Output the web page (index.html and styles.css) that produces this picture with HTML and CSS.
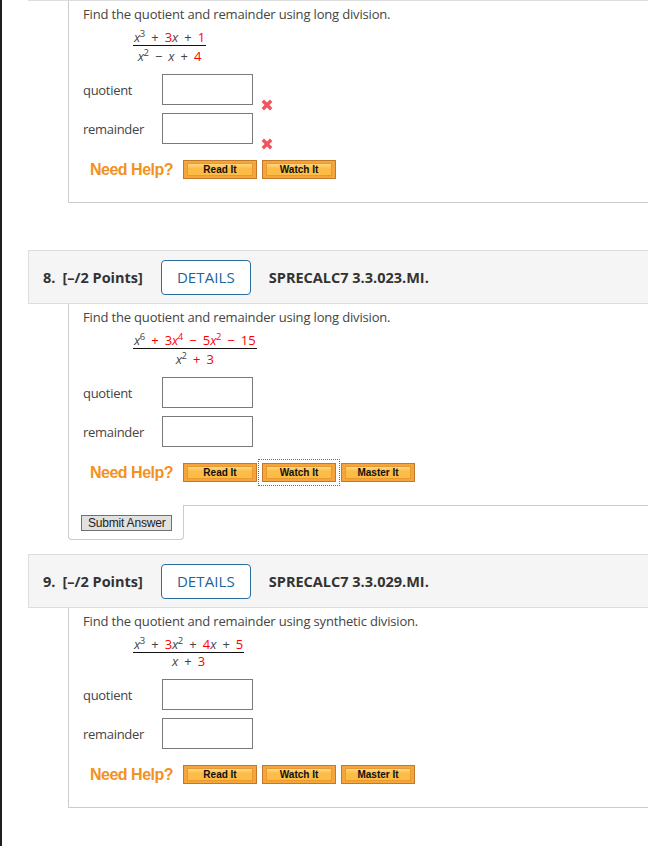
FILE: index.html
```html
<!DOCTYPE html>
<html lang="en">
<head>
    <meta charset="UTF-8">
    <meta name="viewport" content="width=device-width, initial-scale=1.0">
    <title>Assignment</title>
    <link rel="stylesheet" href="styles.css">
</head>
<body>

    <div class="page">

        <!-- question 7 (header scrolled away) -->
        <div class="question">
            <div class="head-tail"></div>
            <div class="q-body">
                <p class="prompt">Find the quotient and remainder using long division.</p>
                <div class="frac">
                    <div class="num"><i>x</i><sup>3</sup><b class="op">+</b><span class="r">3</span><i>x</i><b class="op">+</b><span class="r">1</span></div>
                    <div class="den has-sup"><i>x</i><sup>2</sup><b class="op">&minus;</b><i>x</i><b class="op">+</b><span class="r">4</span></div>
                </div>
                <div class="answer-row">
                    <label>quotient</label>
                    <input type="text" class="ans">
                    <svg class="wrong" width="12" height="12" viewBox="0 0 12 12"><path d="M1.8 1.8 L10.2 10.2 M10.2 1.8 L1.8 10.2"/></svg>
                </div>
                <div class="answer-row">
                    <label>remainder</label>
                    <input type="text" class="ans">
                    <svg class="wrong" width="12" height="12" viewBox="0 0 12 12"><path d="M1.8 1.8 L10.2 10.2 M10.2 1.8 L1.8 10.2"/></svg>
                </div>
                <div class="help-row">
                    <span class="need-help">Need Help?</span>
                    <button class="help-btn"><span>Read It</span></button>
                    <button class="help-btn"><span>Watch It</span></button>
                </div>
            </div>
        </div>

        <!-- question 8 -->
        <div class="question has-submit">
            <div class="q-head">
                <span class="q-num">8.</span>
                <span>[&ndash;/2 Points]</span>
                <button class="details">DETAILS</button>
                <span class="q-code">SPRECALC7 3.3.023.MI.</span>
            </div>
            <div class="q-body">
                <p class="prompt">Find the quotient and remainder using long division.</p>
                <div class="frac">
                    <div class="num"><i>x</i><sup>6</sup><span class="r"><b class="op">+</b>3<i>x</i><sup>4</sup><b class="op">&minus;</b>5<i>x</i><sup>2</sup><b class="op">&minus;</b>15</span></div>
                    <div class="den has-sup"><i>x</i><sup>2</sup><span class="r"><b class="op">+</b>3</span></div>
                </div>
                <div class="answer-row">
                    <label>quotient</label>
                    <input type="text" class="ans">
                </div>
                <div class="answer-row">
                    <label>remainder</label>
                    <input type="text" class="ans">
                </div>
                <div class="help-row">
                    <span class="need-help">Need Help?</span>
                    <button class="help-btn"><span>Read It</span></button>
                    <button class="help-btn focused"><span>Watch It</span></button>
                    <button class="help-btn"><span>Master It</span></button>
                </div>
            </div>
            <div class="submit-tab">
                <button class="submit-btn">Submit Answer</button>
            </div>
        </div>

        <!-- question 9 -->
        <div class="question">
            <div class="q-head">
                <span class="q-num">9.</span>
                <span>[&ndash;/2 Points]</span>
                <button class="details">DETAILS</button>
                <span class="q-code">SPRECALC7 3.3.029.MI.</span>
            </div>
            <div class="q-body">
                <p class="prompt">Find the quotient and remainder using synthetic division.</p>
                <div class="frac">
                    <div class="num"><i>x</i><sup>3</sup><b class="op">+</b><span class="r">3</span><i>x</i><sup>2</sup><b class="op">+</b><span class="r">4</span><i>x</i><b class="op">+</b><span class="r">5</span></div>
                    <div class="den"><i>x</i><b class="op">+</b><span class="r">3</span></div>
                </div>
                <div class="answer-row">
                    <label>quotient</label>
                    <input type="text" class="ans">
                </div>
                <div class="answer-row">
                    <label>remainder</label>
                    <input type="text" class="ans">
                </div>
                <div class="help-row">
                    <span class="need-help">Need Help?</span>
                    <button class="help-btn"><span>Read It</span></button>
                    <button class="help-btn"><span>Watch It</span></button>
                    <button class="help-btn"><span>Master It</span></button>
                </div>
            </div>
        </div>

    </div>

</body>
</html>
```

FILE: styles.css
```css
body {
    margin: 0;
    font-family: "Open Sans", sans-serif;
    color: #444;
    background: #fff;
}

/* dark line at the left of the frame */
.page {
    min-height: 100vh;
    box-sizing: border-box;
    border-left: 2px solid #1e1e1e;
    overflow: hidden;
}

.question {
    padding-bottom: 47px;
}

.question.has-submit {
    padding-bottom: 14px;
}

/* bottom edge of the header above the fold */
.head-tail {
    margin-left: 26px;
    border-bottom: 1px solid #ddd;
}

/* question header */
.q-head {
    display: flex;
    align-items: center;
    height: 52px;
    margin-left: 26px;
    padding: 0 14px;
    border: 1px solid #ddd;
    border-right: 0;
    background-color: #f5f5f5;
    color: #333;
    font-size: 14.5px;
    font-weight: bold;
}

.q-num {
    margin-right: 7px;
}

.details {
    height: 35px;
    margin-left: 18px;
    padding: 0 15px;
    border: 1px solid #2b6d9c;
    border-radius: 4px;
    background: #fff;
    color: #1c659b;
    font-family: "Open Sans", sans-serif;
    font-size: 15px;
    letter-spacing: 0.1px;
}

.q-code {
    margin-left: 18px;
}

/* question body */
.q-body {
    margin-left: 66px;
    padding: 4px 0 23px 14px;
    border-left: 1px solid #ccc;
    border-bottom: 1px solid #ccc;
}

.prompt {
    margin: 0;
    font-size: 13px;
    line-height: 18px;
    letter-spacing: -0.17px;
}

/* fraction */
.frac {
    display: inline-block;
    margin: 7px 0 0 50px;
    font-size: 13px;
    text-align: center;
}

.frac .num {
    line-height: 15px;
    padding: 0 1px;
    border-bottom: 1px solid #111;
}

.frac .den {
    padding-top: 1px;
    line-height: 15px;
}

.frac .den.has-sup {
    padding-top: 3px;
}

.frac i {
    margin-right: 0;
}

.frac sup {
    margin-left: -0.5px;
    font-size: 9.5px;
    line-height: 0;
    vertical-align: 5px;
}

.frac .op {
    margin: 0 6px;
    font-weight: normal;
}

.r {
    color: #f00;
}

/* answer rows */
.answer-row {
    display: flex;
    align-items: center;
    margin-top: 8px;
}

.answer-row label {
    width: 79px;
    font-size: 13px;
    letter-spacing: -0.3px;
}

.ans {
    width: 91px;
    height: 31px;
    box-sizing: border-box;
    margin: 0;
    border: 1px solid #7a7a7a;
    background: #fff;
}

.wrong {
    align-self: flex-end;
    margin: 0 0 -6px 8px;
    fill: none;
    stroke: #f2545b;
    stroke-width: 3.4;
}

/* need help */
.help-row {
    display: flex;
    align-items: center;
    margin-top: 16px;
    height: 19px;
}

.need-help {
    margin: 0 10px 0 7px;
    color: #f39121;
    font-family: "Liberation Sans", Arial, sans-serif;
    font-size: 16px;
    font-weight: bold;
    letter-spacing: -0.5px;
}

.help-btn {
    width: 74px;
    height: 19px;
    box-sizing: border-box;
    margin: 0 5px 0 0;
    padding: 2px 3px;
    border: 1px solid #c27a2a;
    background: #f6a53a;
    color: #111;
    font-family: "Liberation Sans", Arial, sans-serif;
    font-size: 10px;
    font-weight: bold;
}

.help-btn span {
    display: block;
    height: 13px;
    box-sizing: border-box;
    border: 1px solid #e89a30;
    background: linear-gradient(#ffd887, #fdbc46 40%);
    line-height: 11px;
}

.help-btn.focused {
    outline: 1px dotted #1e7be0;
    outline-offset: 3px;
}

/* submit tab under the body */
.submit-tab {
    width: 116px;
    box-sizing: border-box;
    margin: -1px 0 0 66px;
    padding: 10px 0 8px 12px;
    border: 1px solid #ccc;
    border-top: 0;
    border-radius: 0 0 4px 4px;
    background: #fff;
}

.submit-btn {
    display: block;
    height: 16px;
    margin: 0;
    padding: 0 6px;
    border: 1px solid #707070;
    background: #e1e1e1;
    color: #222;
    font-family: "Liberation Sans", Arial, sans-serif;
    font-size: 12px;
    line-height: 14px;
    letter-spacing: -0.2px;
}
```
